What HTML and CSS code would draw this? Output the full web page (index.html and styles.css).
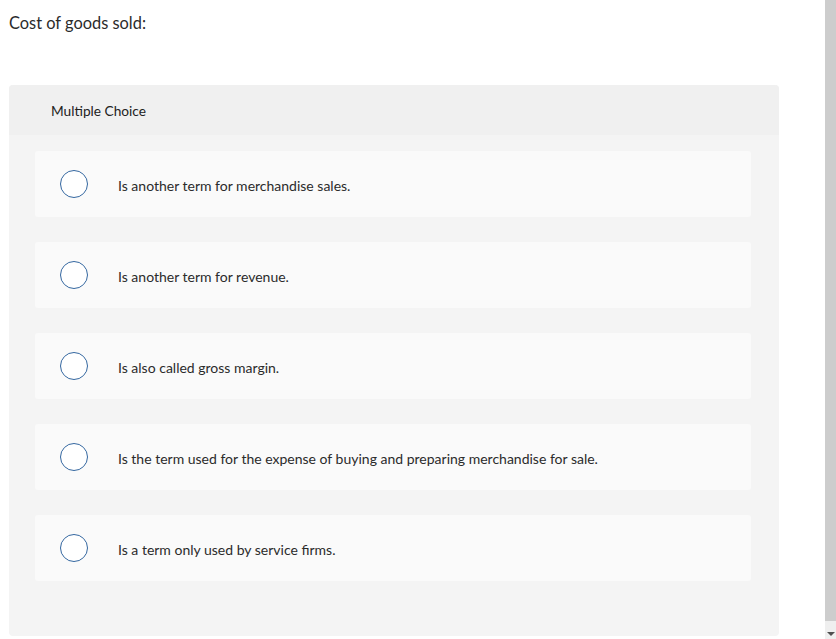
FILE: index.html
```html
<!DOCTYPE html>
<html lang="en">
<head>
    <meta charset="UTF-8">
    <title>Cost of goods sold</title>
    <link rel="stylesheet" href="styles.css">
</head>
<body>
<div class="page">
    <p class="question">Cost of goods sold:</p>
    <div class="mc-panel">
        <div class="mc-header">Multiple Choice</div>
        <ul class="mc-options">
            <li class="mc-option"><span class="radio"></span><span class="label">Is another term for merchandise sales.</span></li>
            <li class="mc-option"><span class="radio"></span><span class="label">Is another term for revenue.</span></li>
            <li class="mc-option"><span class="radio"></span><span class="label">Is also called gross margin.</span></li>
            <li class="mc-option"><span class="radio"></span><span class="label">Is the term used for the expense of buying and preparing merchandise for sale.</span></li>
            <li class="mc-option"><span class="radio"></span><span class="label">Is a term only used by service firms.</span></li>
        </ul>
    </div>
</div>
<div class="scrollbar">
    <div class="thumb"></div>
    <div class="arrow"></div>
</div>
</body>
</html>
```

FILE: styles.css
```css
*{
    margin: 0;
    padding: 0;
    box-sizing: border-box;
}
html, body{
    background: #fff;
    overflow: hidden;
}
body{
    font-family: Lato, "Open Sans", sans-serif;
    color: #2b2b2b;
}
li{
    list-style: none;
}
.page{
    padding: 13px 0 0 9px;
}
.question{
    font-size: 16.4px;
    line-height: 20px;
}
.mc-panel{
    width: 770px;
    margin-top: 52px;
    background: #f4f4f4;
    border-radius: 4px;
    overflow: hidden;
}
.mc-header{
    height: 50px;
    display: flex;
    align-items: center;
    padding-left: 42px;
    background: #f0f0f0;
    font-size: 13.7px;
    color: #222;
}
.mc-options{
    display: flex;
    flex-direction: column;
    gap: 25px;
    padding: 16px 28px 55px 26px;
}
.mc-option{
    height: 66px;
    display: flex;
    align-items: center;
    padding-left: 25px;
    background: #fafafa;
    border-radius: 3px;
    font-size: 14px;
}
.mc-option .radio{
    width: 28px;
    height: 28px;
    flex: none;
    border: 1.5px solid #3467a0;
    border-radius: 50%;
    background: #fff;
}
.mc-option .label{
    margin-left: 30px;
    padding-top: 2px;
}
.scrollbar{
    position: fixed;
    top: 0;
    right: 0;
    width: 11px;
    height: 100%;
    background: #efefef;
}
.scrollbar .thumb{
    height: 621px;
    background: #cdcdcd;
}
.scrollbar .arrow{
    margin: 11px 0 0 2px;
    width: 0;
    height: 0;
    border-left: 4px solid transparent;
    border-right: 4px solid transparent;
    border-top: 4px solid #505050;
}
```
